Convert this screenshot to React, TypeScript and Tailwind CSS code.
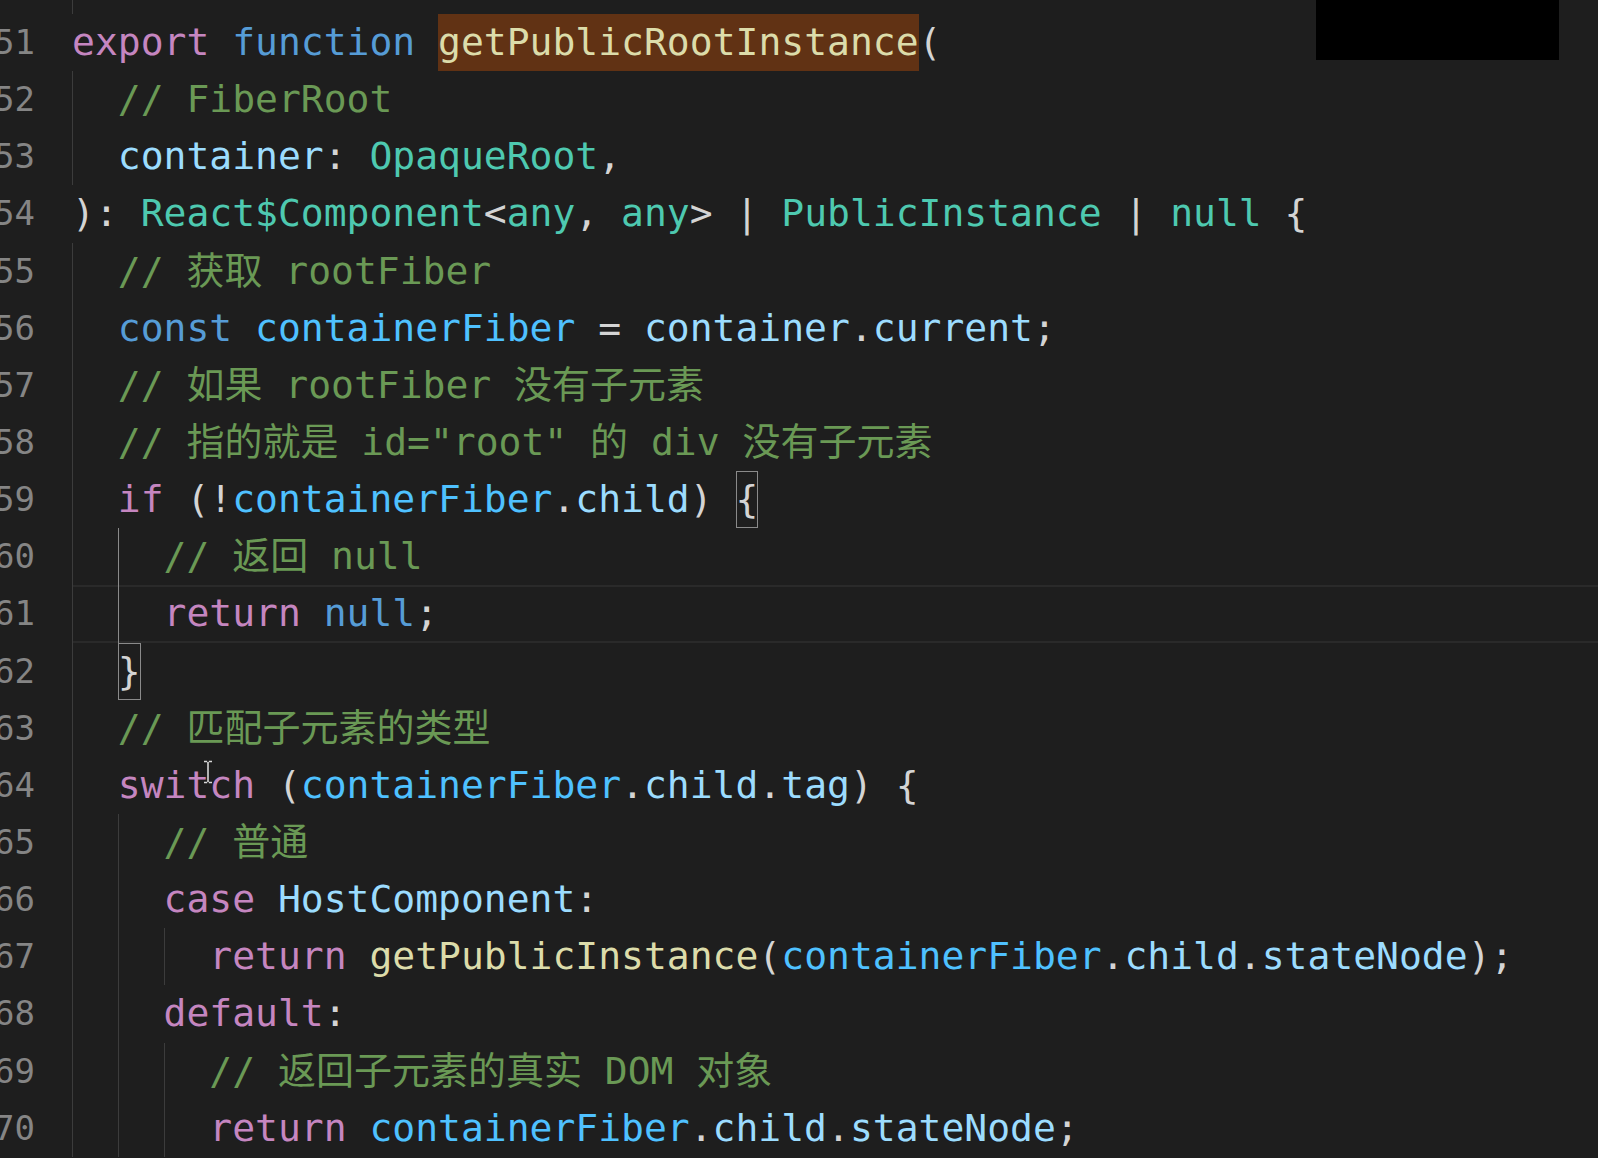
import React from "react";

type Kind = "k" | "b" | "f" | "c" | "v" | "t" | "n" | "p";
type Tok = [Kind, string, ("hl" | "br")?];

type Line = {
  n: number;
  indent: number;
  toks: Tok[];
  active?: number;
  current?: boolean;
};

const color: Record<Kind, string> = {
  k: "text-[#c586c0]",
  b: "text-[#569cd6]",
  f: "text-[#dcdcaa]",
  c: "text-[#6a9955]",
  v: "text-[#9cdcfe]",
  t: "text-[#4ec9b0]",
  n: "text-[#4fc1ff]",
  p: "text-[#d4d4d4]",
};

const lines: Line[] = [
  { n: 50, indent: 1, toks: [] },
  {
    n: 51,
    indent: 0,
    toks: [["k", "export"], ["p", " "], ["b", "function"], ["p", " "], ["f", "getPublicRootInstance", "hl"], ["p", "("]],
  },
  { n: 52, indent: 1, toks: [["c", "// FiberRoot"]] },
  { n: 53, indent: 1, toks: [["v", "container"], ["p", ": "], ["t", "OpaqueRoot"], ["p", ","]] },
  {
    n: 54,
    indent: 0,
    toks: [
      ["p", "): "], ["t", "React$Component"], ["p", "<"], ["t", "any"], ["p", ", "], ["t", "any"],
      ["p", "> | "], ["t", "PublicInstance"], ["p", " | "], ["t", "null"], ["p", " {"],
    ],
  },
  { n: 55, indent: 1, toks: [["c", "// 获取 rootFiber"]] },
  {
    n: 56,
    indent: 1,
    toks: [["b", "const"], ["p", " "], ["n", "containerFiber"], ["p", " = "], ["v", "container"], ["p", "."], ["v", "current"], ["p", ";"]],
  },
  { n: 57, indent: 1, toks: [["c", "// 如果 rootFiber 没有子元素"]] },
  { n: 58, indent: 1, toks: [["c", '// 指的就是 id="root" 的 div 没有子元素']] },
  {
    n: 59,
    indent: 1,
    toks: [["k", "if"], ["p", " (!"], ["n", "containerFiber"], ["p", "."], ["v", "child"], ["p", ") "], ["p", "{", "br"]],
  },
  { n: 60, indent: 2, active: 1, toks: [["c", "// 返回 null"]] },
  { n: 61, indent: 2, active: 1, current: true, toks: [["k", "return"], ["p", " "], ["b", "null"], ["p", ";"]] },
  { n: 62, indent: 1, toks: [["p", "}", "br"]] },
  { n: 63, indent: 1, toks: [["c", "// 匹配子元素的类型"]] },
  {
    n: 64,
    indent: 1,
    toks: [["k", "switch"], ["p", " ("], ["n", "containerFiber"], ["p", "."], ["v", "child"], ["p", "."], ["v", "tag"], ["p", ") {"]],
  },
  { n: 65, indent: 2, toks: [["c", "// 普通"]] },
  { n: 66, indent: 2, toks: [["k", "case"], ["p", " "], ["v", "HostComponent"], ["p", ":"]] },
  {
    n: 67,
    indent: 3,
    toks: [
      ["k", "return"], ["p", " "], ["f", "getPublicInstance"], ["p", "("], ["n", "containerFiber"], ["p", "."],
      ["v", "child"], ["p", "."], ["v", "stateNode"], ["p", ");"],
    ],
  },
  { n: 68, indent: 2, toks: [["k", "default"], ["p", ":"]] },
  { n: 69, indent: 3, toks: [["c", "// 返回子元素的真实 DOM 对象"]] },
  {
    n: 70,
    indent: 3,
    toks: [["k", "return"], ["p", " "], ["n", "containerFiber"], ["p", "."], ["v", "child"], ["p", "."], ["v", "stateNode"], ["p", ";"]],
  },
];

const CodeLine = ({ line }: { line: Line }) => {
  const guides = Array.from({ length: line.indent }, (_, i) => i);
  return (
    <div className="flex h-[57.15px] shrink-0">
      <div className="flex w-[35px] shrink-0 justify-end overflow-hidden text-[34px] leading-[57.15px] text-[#858585]">
        <span className="whitespace-pre">{line.n}</span>
      </div>
      <div
        className={
          "ml-[37px] flex flex-1 items-stretch " +
          (line.current ? "shadow-[inset_0_2px_0_#2a2a2a,inset_0_-2px_0_#2a2a2a]" : "")
        }
      >
        {guides.map((g) => (
          <div
            key={g}
            className={
              "w-[45.76px] shrink-0 border-l " +
              (line.active === g ? "border-[#8a8a8a]" : "border-[#3c3c3c]")
            }
          />
        ))}
        {line.toks.map(([k, text, extra], i) => (
          <span
            key={i}
            className={
              "whitespace-pre leading-[57.15px] " +
              color[k] +
              (extra === "hl" ? " bg-[#613214]" : "") +
              (extra === "br" ? " outline-1 -outline-offset-1 outline-[#8a8a8a]" : "")
            }
          >
            {text}
          </span>
        ))}
      </div>
    </div>
  );
};

const IBeam = () => (
  <svg
    className="absolute left-[201px] top-[760px]"
    width="14"
    height="24"
    viewBox="0 0 14 24"
    fill="none"
    stroke="#d8d8d8"
    strokeWidth="1.6"
  >
    <path d="M3 1.5h3.2M7.8 1.5H11M7 2v20M3 22.5h3.2M7.8 22.5H11" />
  </svg>
);

export default function App() {
  return (
    <div
      className="relative h-[1158px] w-full overflow-hidden bg-[#1e1e1e] text-[38px]"
      style={{ fontFamily: '"DejaVu Sans Mono", "Noto Sans CJK SC", monospace' }}
    >
      <div className="-mt-[43.15px] flex flex-col">
        {lines.map((l) => (
          <CodeLine key={l.n} line={l} />
        ))}
      </div>
      <div className="absolute left-[1316px] top-0 h-[60px] w-[243px] bg-black" />
      <IBeam />
    </div>
  );
}
